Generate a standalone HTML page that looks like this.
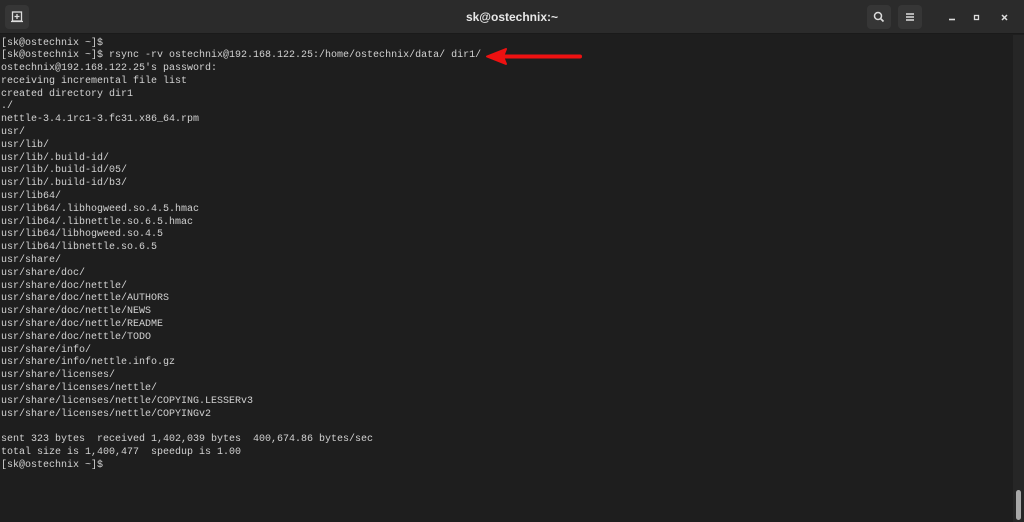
<!DOCTYPE html>
<html><head><style>
*{margin:0;padding:0;box-sizing:border-box}
body{width:1024px;height:522px;background:#1e1e1e;overflow:hidden;position:relative;font-family:"Liberation Sans",sans-serif}
.tb{position:absolute;left:0;top:0;width:1024px;height:34px;background:#2b2b2b;border-bottom:1px solid #1a1a1a}
.btn{position:absolute;top:5px;width:24px;height:24px;background:#363636;border-radius:4px}
.title{position:absolute;top:0;left:0;width:1024px;text-align:center;line-height:34px;color:#e8e8e8;font-size:12px;font-weight:bold}
pre{position:absolute;left:1px;top:37.5px;font-family:"Liberation Mono",monospace;font-size:10px;line-height:12.79px;color:#d2d2d2}
.sb{position:absolute;right:0;top:35px;width:11px;height:487px;background:#262626}
.th{position:absolute;left:1016px;top:490px;width:5px;height:30px;background:#a8a8a8;border-radius:3px}
</style></head><body>
<div class="tb">
<div class="btn" style="left:5px"><svg width="24" height="24"><rect x="7.5" y="7" width="9" height="9" fill="none" stroke="#ddd" stroke-width="1.3"/><path d="M6 16.5h12M12 9v5M9.5 11.5h5" stroke="#ddd" stroke-width="1.3"/></svg></div>
<div class="title">sk@ostechnix:~</div>
<div class="btn" style="left:867px"><svg width="24" height="24"><circle cx="11" cy="11" r="3.5" fill="none" stroke="#ddd" stroke-width="1.5"/><path d="M13.5 13.5l3 3" stroke="#ddd" stroke-width="1.7"/></svg></div>
<div class="btn" style="left:898px"><svg width="24" height="24"><path d="M8 9h8M8 12h8M8 15h8" stroke="#ddd" stroke-width="1.4"/></svg></div>
<svg style="position:absolute;left:940px;top:10px" width="84" height="16"><path d="M9 9.5h6" stroke="#ddd" stroke-width="1.6"/><rect x="34.5" y="5.5" width="4" height="4" fill="none" stroke="#ddd" stroke-width="1.3"/><path d="M62 5l5 5M67 5l-5 5" stroke="#ddd" stroke-width="1.5"/></svg>
</div>
<pre>[sk@ostechnix ~]$
[sk@ostechnix ~]$ rsync -rv ostechnix@192.168.122.25:/home/ostechnix/data/ dir1/
ostechnix@192.168.122.25's password:
receiving incremental file list
created directory dir1
./
nettle-3.4.1rc1-3.fc31.x86_64.rpm
usr/
usr/lib/
usr/lib/.build-id/
usr/lib/.build-id/05/
usr/lib/.build-id/b3/
usr/lib64/
usr/lib64/.libhogweed.so.4.5.hmac
usr/lib64/.libnettle.so.6.5.hmac
usr/lib64/libhogweed.so.4.5
usr/lib64/libnettle.so.6.5
usr/share/
usr/share/doc/
usr/share/doc/nettle/
usr/share/doc/nettle/AUTHORS
usr/share/doc/nettle/NEWS
usr/share/doc/nettle/README
usr/share/doc/nettle/TODO
usr/share/info/
usr/share/info/nettle.info.gz
usr/share/licenses/
usr/share/licenses/nettle/
usr/share/licenses/nettle/COPYING.LESSERv3
usr/share/licenses/nettle/COPYINGv2

sent 323 bytes  received 1,402,039 bytes  400,674.86 bytes/sec
total size is 1,400,477  speedup is 1.00
[sk@ostechnix ~]$</pre>
<svg style="position:absolute;left:480px;top:46px" width="110" height="22"><path d="M22 10.5H100" stroke="#ee1111" stroke-width="4" stroke-linecap="round"/><path d="M7 10.5L26 3L23 10.5L26 18Z" fill="#ee1111" stroke="#ee1111" stroke-width="2" stroke-linejoin="round"/></svg>
<div class="sb"></div><div class="th"></div>
</body></html>
